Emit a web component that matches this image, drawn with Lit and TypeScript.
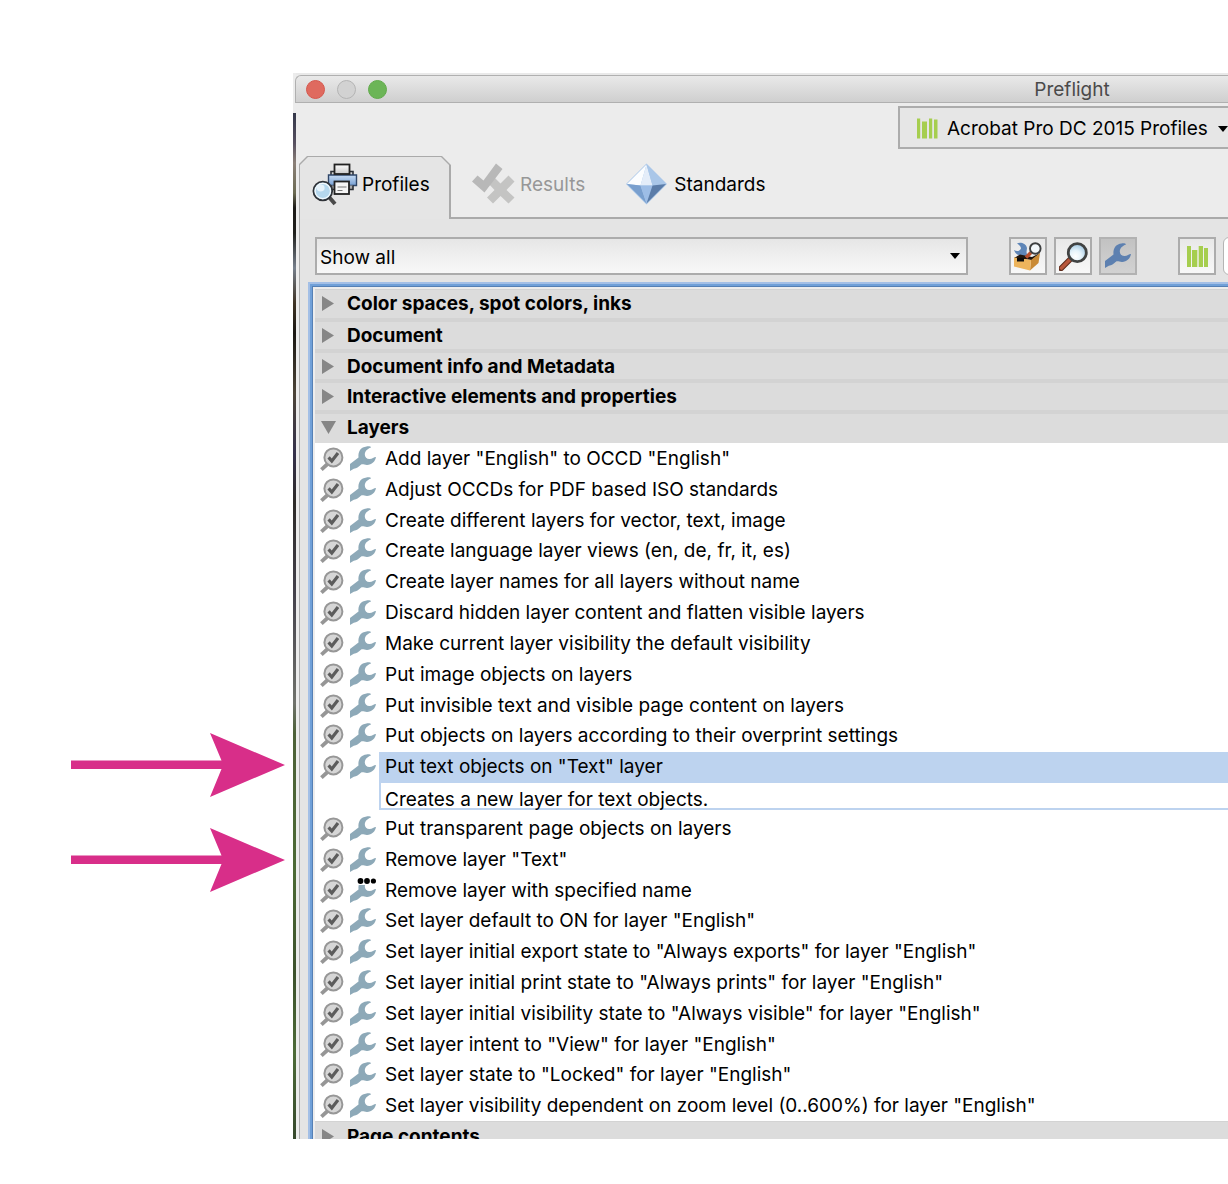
import { LitElement, html, css, svg, nothing } from "lit";
import { customElement, state } from "lit/decorators.js";
import { classMap } from "lit/directives/class-map.js";

interface Fixup {
  name: string;
  description?: string;
  parametric?: boolean;
}

const closedGroups = [
  "Color spaces, spot colors, inks",
  "Document",
  "Document info and Metadata",
  "Interactive elements and properties",
];

const layerFixups: Fixup[] = [
  { name: 'Add layer "English" to OCCD "English"' },
  { name: "Adjust OCCDs for PDF based ISO standards" },
  { name: "Create different layers for vector, text, image" },
  { name: "Create language layer views (en, de, fr, it, es)" },
  { name: "Create layer names for all layers without name" },
  { name: "Discard hidden layer content and flatten visible layers" },
  { name: "Make current layer visibility the default visibility" },
  { name: "Put image objects on layers" },
  { name: "Put invisible text and visible page content on layers" },
  { name: "Put objects on layers according to their overprint settings" },
  { name: 'Put text objects on "Text" layer', description: "Creates a new layer for text objects." },
  { name: "Put transparent page objects on layers" },
  { name: 'Remove layer "Text"' },
  { name: "Remove layer with specified name", parametric: true },
  { name: 'Set layer default to ON for layer "English"' },
  { name: 'Set layer initial export state to "Always exports" for layer "English"' },
  { name: 'Set layer initial print state to "Always prints" for layer "English"' },
  { name: 'Set layer initial visibility state to "Always visible" for layer "English"' },
  { name: 'Set layer intent to "View" for layer "English"' },
  { name: 'Set layer state to "Locked" for layer "English"' },
  { name: 'Set layer visibility dependent on zoom level (0..600%) for layer "English"' },
];

const wrenchShape = "M0 25V18L8.500 11.500C7.800 5 11 1 16.500.4C19 .1 21.400.7 21 1.600C19 2.400 14.800 4.400 14.800 8.400C14.800 11.200 17 13.200 19.600 13C22.400 12.800 23.800 11.200 26 11C25.400 15.400 21.800 18.900 17 18.900C14.400 18.900 12.600 17.800 11.200 18.600C8 21.200 7 22.600 3.800 22.800Z";

const wrenchIcon = (dots = false) => html`<svg class="wrench" viewBox="0 0 26 26" width="26" height="26" aria-hidden="true">
  <path d=${wrenchShape} fill="currentColor"></path>
  ${dots
    ? svg`<rect x="5" y="0" width="21" height="7" fill="#fff"></rect><circle cx="10.500" cy="3" r="2.900"></circle><circle cx="17" cy="3" r="2.900"></circle><circle cx="23.400" cy="3" r="2.600"></circle>`
    : nothing}
</svg>`;

const checkLensIcon = html`<svg viewBox="0 0 24 24" width="24" height="24" aria-hidden="true">
  <path d="M1.400 22.600L7.600 17" stroke="#969696" stroke-width="3.800"></path>
  <circle cx="13.400" cy="10.400" r="9" fill="#d6d6d6" stroke="#979797" stroke-width="2"></circle>
  <path d="M8.600 10.400L11.800 14L18 6" fill="none" stroke="#5c5c5c" stroke-width="3.200"></path>
</svg>`;

const booksIcon = html`<svg viewBox="0 0 21 21" width="21" height="21" aria-hidden="true">
  <path d="M0 0h4v21H0zM5 4h5.300v17H5zM11.700 0h4.300v21h-4.300zM17 2h4v19h-4z" fill="#a6ce4f"></path>
</svg>`;

const shelfIcon = html`<svg viewBox="0 0 21 21" width="21" height="21" aria-hidden="true">
  <path d="M0 .5h3.200v20H0zM5 3.500h5v17H5zM12 .5h3.200v20H12zM17 1.500h3.500v19H17z" fill="#a6ce4f"></path>
</svg>`;

const profilesIcon = html`<svg viewBox="0 0 46 43" width="46" height="43" aria-hidden="true">
  <defs>
    <linearGradient id="printer" x1="0" y1="0" x2="0" y2="1"><stop offset="0" stop-color="#c7dcf4"></stop><stop offset="1" stop-color="#769fd3"></stop></linearGradient>
    <linearGradient id="paper" x1="0" y1="0" x2="0" y2="1"><stop offset="0" stop-color="#fff"></stop><stop offset="1" stop-color="#c9c9c9"></stop></linearGradient>
  </defs>
  <path d="M19 12V8.500H41V12" fill="#d4d4d4" stroke="#2b2f36" stroke-width="1.600"></path>
  <path d="M16.500 12H44.500V22.500H16.500Z" fill="url(#printer)" stroke="#2f4668" stroke-width="1.400"></path>
  <path d="M19.500 22.500V26.500H41V22.500" fill="#a9a9a9" stroke="#2b2f36" stroke-width="1.600"></path>
  <rect x="22.500" y="1.500" width="15" height="9.500" fill="url(#paper)" stroke="#222" stroke-width="1.800"></rect>
  <rect x="22.500" y="18.500" width="14.500" height="12.500" fill="#f5f5f5" stroke="#222" stroke-width="1.800"></rect>
  <path d="M25.500 24h9M25.500 27.500h5" stroke="#777" stroke-width="1.200"></path>
  <path d="M17 34L23 41" stroke="#4a4a4a" stroke-width="4"></path>
  <circle cx="10.800" cy="28" r="9.400" fill="#b5d8ee" stroke="#303338" stroke-width="1.800"></circle>
  <circle cx="10.800" cy="28" r="7.700" fill="none" stroke="#f4fafd" stroke-width="1.200"></circle>
  <ellipse cx="8.600" cy="25" rx="4" ry="3.400" fill="#eef8fd" opacity=".85"></ellipse>
</svg>`;

const resultsIcon = html`<svg viewBox="0 0 43 42" width="43" height="42" aria-hidden="true">
  <path d="M15 19L21 13L28.500 20.500L36.500 12.500L42.500 18.500L34.500 27L42.500 34.500L36.500 40.500L28.500 33L21 40.500L15 34.500L22.500 27Z" fill="#c4c4c3"></path>
  <path d="M0 18.500L5.500 12.500L11.500 17.500L24 .5L30.500 6L12.500 29.500Z" fill="#b8b8b8"></path>
</svg>`;

const standardsIcon = html`<svg viewBox="0 0 41 42" width="41" height="42" aria-hidden="true">
  <path d="M20.500 .5L41 21L20.500 41.500L0 21Z" fill="#a9c6e8"></path>
  <path d="M20.500 1.500L14.500 22.500L1 21Z" fill="#fbfdff"></path>
  <path d="M20.500 1.500L26.500 22.500H14.500Z" fill="#e4edf9"></path>
  <path d="M20.500 1.500L40 21L26.500 22.500Z" fill="#a9c6e8"></path>
  <path d="M1 21L14.500 22.500L20.500 40.500Z" fill="#799fce"></path>
  <path d="M14.500 22.500H26.500L20.500 40.500Z" fill="#9dbde6"></path>
  <path d="M40 21L26.500 22.500L20.500 40.500Z" fill="#5b7ca8"></path>
</svg>`;

const toolboxIcon = html`<svg viewBox="0 0 28 29" width="28" height="29" aria-hidden="true">
  <path d="M3 1.500C6 0 12 1 13 6C13 9 11 11 15 14L10 17L6 13C3 13 1 11 0 8C3 10 6 9 7 6.500C7 4 5 3 3 1.500Z" fill="#5f86b8"></path>
  <path d="M0 16L6 12.500L18 15L26 11L18 18Z" fill="#20140c"></path>
  <path d="M17 18L26 11L24.500 21L16 28.500Z" fill="#c98a35"></path>
  <path d="M0 15.500L17 18L16 28.500L0 24.500Z" fill="#edb45c"></path>
  <path d="M3 16h7v3.500H3z" fill="#0b0b0b"></path>
  <path d="M12 15.500L17 10.500" stroke="#b94f2d" stroke-width="3.500"></path>
  <circle cx="21.300" cy="6.500" r="5.300" fill="#f3f8fb" stroke="#3d3f40" stroke-width="1.900"></circle>
</svg>`;

const magnifierIcon = html`<svg viewBox="0 0 29 29" width="29" height="29" aria-hidden="true">
  <defs><radialGradient id="glass" cx=".4" cy=".7" r=".8"><stop offset="0" stop-color="#fff"></stop><stop offset=".4" stop-color="#e5f3fb"></stop><stop offset="1" stop-color="#8ebbda"></stop></radialGradient></defs>
  <path d="M2 26.500L11 17.500" stroke="#5d2a1a" stroke-width="5.500" stroke-linecap="round"></path>
  <path d="M2.500 26L10.500 18" stroke="#b8573c" stroke-width="3.600" stroke-linecap="round"></path>
  <circle cx="18.300" cy="10.700" r="9" fill="url(#glass)" stroke="#414343" stroke-width="2.800"></circle>
</svg>`;

const caretIcon = html`<svg class="caret" viewBox="0 0 10 6" width="10" height="6" aria-hidden="true"><path d="M0 0H10L5 6Z"></path></svg>`;

const arrowIcon = (place: string) => html`<svg class="arrow ${place}" viewBox="0 0 214 64" width="214" height="64" aria-hidden="true">
  <path d="M0 27.500H150.500L139 0L214 32L139 64L150.500 36H0Z" fill="#d82e89"></path>
</svg>`;

@customElement("app-root")
export class AppRoot extends LitElement {
  @state() private layersOpen = true;
  @state() private selected = 10;

  static styles = css`
    :host {
      display: block;
      font-family: Inter, "Liberation Sans", sans-serif;
      font-size: 19px;
      color: #000;
      background: #fff;
    }
    * { box-sizing: border-box; }
    svg { display: block; flex: none; }
    button, select, input { font: inherit; color: inherit; margin: 0; border-radius: 0; }
    button { padding: 0; border: 0; background: none; }
    .page {
      position: relative;
      display: grid;
      grid-template-columns: 293px 3px minmax(0, 1fr);
      height: 100vh;
      min-height: 600px;
      padding: 73px 0 45px;
      overflow: hidden;
    }
    .arrow { position: absolute; left: 71px; }
    .arrow.first { top: 733px; }
    .arrow.second { top: 828px; }
    .backdrop {
      grid-column: 2;
      background: linear-gradient(#ececec 40px, #34384a 40px, #575060 70px, #8b8078 90px, #6b6a52 120px, #1c1a17 135px, #20201d 160px, #77808c 195px, #3f3325 230px, #1b1713 260px, #4c4438 320px, #35314b 380px, #2d2a28 430px, #44414b 520px, #70726c 630px, #4d6138 660px, #4c6a35 800px, #3c512c 900px, #4d6b38 980px, #36482c);
    }
    .window {
      display: flex;
      flex-direction: column;
      width: calc(100% + 620px);
      min-height: 0;
      background: #ececec;
      border-top: 2px solid #e9e9e9;
    }
    .titlebar {
      position: relative;
      display: flex;
      flex: none;
      align-items: center;
      justify-content: center;
      height: 28px;
      margin-left: -1px;
      border: 1px solid #b0b0b0;
      border-width: 1px 0 1px 1px;
      border-radius: 6px 0 0 0;
      background: linear-gradient(#e9e9e9, #cfcfcf);
    }
    .title { margin: 0; font-size: 19px; font-weight: 400; color: #4a4a4a; }
    .lights { position: absolute; left: 10px; display: flex; gap: 12px; }
    .light { width: 19px; height: 19px; border: 1px solid #d5574d; border-radius: 50%; background: #df6a5f; }
    .light.minimize { border-color: #b4b4b4; background: #d2d2d2; }
    .light.zoom { border-color: #61ab4b; background: #6cb557; }
    .library { display: flex; justify-content: center; flex: none; padding: 3px 0 7px; }
    .library-box {
      display: flex;
      align-items: center;
      gap: 9px;
      height: 43px;
      padding: 2px 16px 0 17px;
      border: 2px solid #acacac;
      background: #e6e6e6;
    }
    .select-wrap { position: relative; display: flex; align-items: center; }
    .select-wrap select { appearance: none; border: 0; background: none; padding: 0 20px 0 0; }
    .caret { position: absolute; right: 0; pointer-events: none; }
    .tabs {
      display: flex;
      flex: none;
      height: 63px;
      margin-left: 3px;
      background: linear-gradient(#aaa, #aaa) bottom / 100% 2px no-repeat;
    }
    .tab { display: flex; align-items: center; gap: 5px; padding-bottom: 7px; }
    .tab.results { margin-left: 21px; color: #979797; }
    .tab.standards { margin-left: 41px; gap: 7px; }
    .tab.active {
      position: relative;
      z-index: 0;
      width: 152px;
      padding-left: 13px;
      gap: 4px;
      background: #aaa;
      clip-path: polygon(0 8px, 8px 0, calc(100% - 9px) 0, 100% 9px, 100% 100%, 0 100%);
    }
    .tab.active::before {
      content: "";
      position: absolute;
      z-index: -1;
      inset: 1px 2px 0 1px;
      background: #e5e5e5;
      clip-path: polygon(0 8px, 8px 0, calc(100% - 8px) 0, 100% 8px, 100% 100%, 0 100%);
    }
    .panel {
      display: flex;
      flex: 1;
      flex-direction: column;
      min-height: 0;
      margin-left: 3px;
      overflow: hidden;
      border-left: 1px solid #acacac;
      background: #e4e4e4;
    }
    .toolbar { display: flex; flex: none; align-items: center; padding: 18px 20px 8px 15px; }
    .filter {
      flex: 1;
      height: 38px;
      border: 2px solid #acacac;
      background: linear-gradient(#e6e6e6, #f8f8f8);
    }
    .filter select { width: 100%; height: 100%; padding: 2px 30px 0 3px; }
    .filter .caret { right: 6px; }
    .tools { display: flex; gap: 7px; margin-left: 41px; }
    .tool {
      display: grid;
      place-items: center;
      width: 38px;
      height: 38px;
      border: 2px solid #acacac;
      background: linear-gradient(#e8e8e8, #f8f8f8);
    }
    .tool.pressed { border-color: #b2b2b2; background: linear-gradient(#c2c2c2, #d2d2d2); color: #5d80b0; }
    .tool.shelf { margin-left: 34px; }
    .search { width: 605px; height: 38px; margin-left: 7px; padding: 0 10px; border: 1px solid #b4b4b4; border-radius: 6px; background: #fff; }
    .list-frame {
      flex: 1;
      min-height: 0;
      margin: 3px 20px 0 12px;
      padding: 2px 0 0 2px;
      overflow: hidden;
      border: 1px solid #5580b5;
      border-width: 1px 0 0 1px;
      box-shadow: 0 0 0 2px #70a0d8, 0 0 0 4px #a3bfe6;
      background: #ededed;
    }
    .list {
      display: grid;
      grid-auto-rows: 1fr;
      height: calc(100% + 13px);
      margin: 0;
      padding: 0;
      list-style: none;
      background: #fff;
    }
    .group {
      display: flex;
      background: #dcdcdc;
      border: 2px solid #d3d3d3;
      border-width: 2px 0;
    }
    .group.open { border-bottom: 0; padding-bottom: 2px; }
    .group:first-child { border-top: 1px solid #d3d3d3; }
    .group.last { border-top: 1px solid #d3d3d3; }
    .group button { display: flex; flex: 1; align-items: center; font-weight: 700; text-align: left; }
    .mark { display: flex; width: 32px; padding-left: 6px; color: #868686; }
    .fixup { display: flex; align-items: center; padding: 1px 0 0 5px; line-height: 28px; }
    .fixup .icons { display: flex; align-items: center; gap: 6px; width: 59px; height: 24px; color: #8da9b8; }
    .fixup .label { align-self: stretch; flex: 1; padding: 0 6px; text-align: left; white-space: nowrap; }
    .fixup.selected .label { background: #bdd3ef; }
    .detail { margin-left: 64px; padding: 4px 4px 0; border: 2px solid #bdd3ef; border-top: 1px solid #bdd3ef; align-self: start; line-height: 26px; height: 28px; }
  `;

  private group(name: string, open = false, last = false) {
    return html`<li class=${classMap({ group: true, open, last })}>
      <button type="button" aria-expanded=${open} @click=${() => { if (name === "Layers") this.layersOpen = !this.layersOpen; }}>
        <span class="mark">${open
          ? html`<svg viewBox="0 0 15 13" width="15" height="13" aria-hidden="true"><path d="M0 0H15L7.500 13Z" fill="currentColor"></path></svg>`
          : html`<svg viewBox="0 0 13 15" width="13" height="15" aria-hidden="true"><path d="M1 0L13 7.500L1 15Z" fill="currentColor"></path></svg>`}</span>
        <span>${name}</span>
      </button>
    </li>`;
  }

  private fixup(item: Fixup, index: number) {
    const selected = index === this.selected;
    return html`<li class=${classMap({ fixup: true, selected })}>
        <span class="icons">${checkLensIcon}${wrenchIcon(item.parametric)}</span>
        <button type="button" class="label" aria-pressed=${selected} @click=${() => (this.selected = index)}>${item.name}</button>
      </li>
      ${selected && item.description ? html`<li class="detail">${item.description}</li>` : nothing}`;
  }

  render() {
    return html`<main class="page">
      <div class="backdrop"></div>
      <section class="window" aria-label="Preflight">
        <header class="titlebar">
          <div class="lights">
            <button type="button" class="light" aria-label="Close"></button>
            <button type="button" class="light minimize" aria-label="Minimize"></button>
            <button type="button" class="light zoom" aria-label="Zoom"></button>
          </div>
          <h1 class="title">Preflight</h1>
        </header>
        <div class="library">
          <div class="library-box">
            ${shelfIcon}
            <div class="select-wrap">
              <select aria-label="Library"><option>Acrobat Pro DC 2015 Profiles</option></select>
              ${caretIcon}
            </div>
          </div>
        </div>
        <nav class="tabs" role="tablist">
          <button type="button" role="tab" aria-selected="true" class="tab active">${profilesIcon}<span>Profiles</span></button>
          <button type="button" role="tab" aria-selected="false" class="tab results" disabled>${resultsIcon}<span>Results</span></button>
          <button type="button" role="tab" aria-selected="false" class="tab standards">${standardsIcon}<span>Standards</span></button>
        </nav>
        <div class="panel">
          <div class="toolbar">
            <div class="select-wrap filter">
              <select aria-label="Filter"><option>Show all</option></select>
              ${caretIcon}
            </div>
            <div class="tools">
              <button type="button" class="tool" aria-label="Profiles">${toolboxIcon}</button>
              <button type="button" class="tool" aria-label="Checks">${magnifierIcon}</button>
              <button type="button" class="tool pressed" aria-label="Fixups" aria-pressed="true">${wrenchIcon()}</button>
              <button type="button" class="tool shelf" aria-label="Libraries">${booksIcon}</button>
            </div>
            <input class="search" type="search" aria-label="Search" />
          </div>
          <div class="list-frame">
            <ul class="list">
              ${closedGroups.map((name) => this.group(name))}
              ${this.group("Layers", this.layersOpen)}
              ${this.layersOpen ? layerFixups.map((item, i) => this.fixup(item, i)) : nothing}
              ${this.group("Page contents", false, true)}
            </ul>
          </div>
        </div>
      </section>
      ${arrowIcon("first")}${arrowIcon("second")}
    </main>`;
  }
}
